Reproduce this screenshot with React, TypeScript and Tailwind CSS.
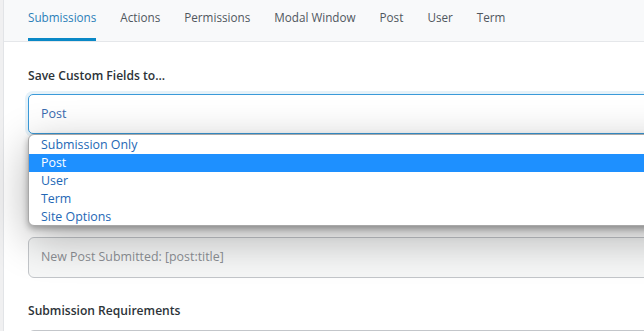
import React from "react";

const tabs = ["Submissions", "Actions", "Permissions", "Modal Window", "Post", "User", "Term"];
const options = ["Submission Only", "Post", "User", "Term", "Site Options"];

export default function App() {
  return (
    <div
      className="w-[644px] h-[331px] overflow-hidden bg-[#f0f0f1] flex"
      style={{ fontFamily: '"Open Sans", "Noto Sans", sans-serif' }}
    >
      <div className="w-[3px] shrink-0" />
      <div className="flex-1 min-w-0 bg-white border-l border-[#e2e4e7] flex flex-col">
        <div className="h-[42px] shrink-0 bg-[#f8f9fa] border-b border-[#e5e7ea] flex gap-[24px] pl-[24px] w-[700px]">
          {tabs.map((t, i) => (
            <div
              key={t}
              className={
                "h-full flex items-start pt-[9px] text-[11.7px] border-b-[3px] " +
                (i === 0 ? "text-[#2b7fb8] border-[#0a88c6]" : "text-[#50575e] border-transparent")
              }
            >
              {t}
            </div>
          ))}
        </div>
        <div className="pl-[24px] w-[700px] flex flex-col">
          <div className="mt-[25px] text-[12.1px] font-semibold text-[#2c3338] leading-[18px]">Save Custom Fields to...</div>
          <div className="relative mt-[9px]">
            <div className="h-[40px] rounded-[5px] border border-[#3a9ad9] ring-[3px] ring-[#e6f2f9] bg-white flex items-center pl-[12px] text-[12.5px] text-[#3a6cb0]">
              Post
            </div>
            <div className="absolute left-0 top-[40px] w-[680px] h-[92px] bg-white border border-[#a8a8a8] rounded-b-[6px] rounded-tl-[6px] shadow-[0_3px_6px_rgba(0,0,0,0.3),0_12px_44px_rgba(0,0,0,0.3)] z-10 pt-[1px] flex flex-col">
              {options.map((o, i) => (
                <div
                  key={o}
                  className={
                    "h-[18px] leading-[18px] pl-[12px] text-[12.4px] " +
                    (i === 1 ? "bg-[#1e90ff] text-white" : "text-[#2367b5]")
                  }
                >
                  {o}
                </div>
              ))}
            </div>
          </div>
          <div className="mt-[103px] h-[41px] rounded-[6px] border border-[#c3c6ca] bg-[#f6f7f7] flex items-center pl-[12px] text-[12.4px] text-[#8c8f94]">
            New Post Submitted: [post:title]
          </div>
          <div className="mt-[24px] text-[12.1px] font-semibold text-[#2c3338] leading-[18px]">Submission Requirements</div>
          <div className="mt-[10px] h-[41px] rounded-[6px] border border-[#c3c6ca] bg-white" />
        </div>
      </div>
    </div>
  );
}
